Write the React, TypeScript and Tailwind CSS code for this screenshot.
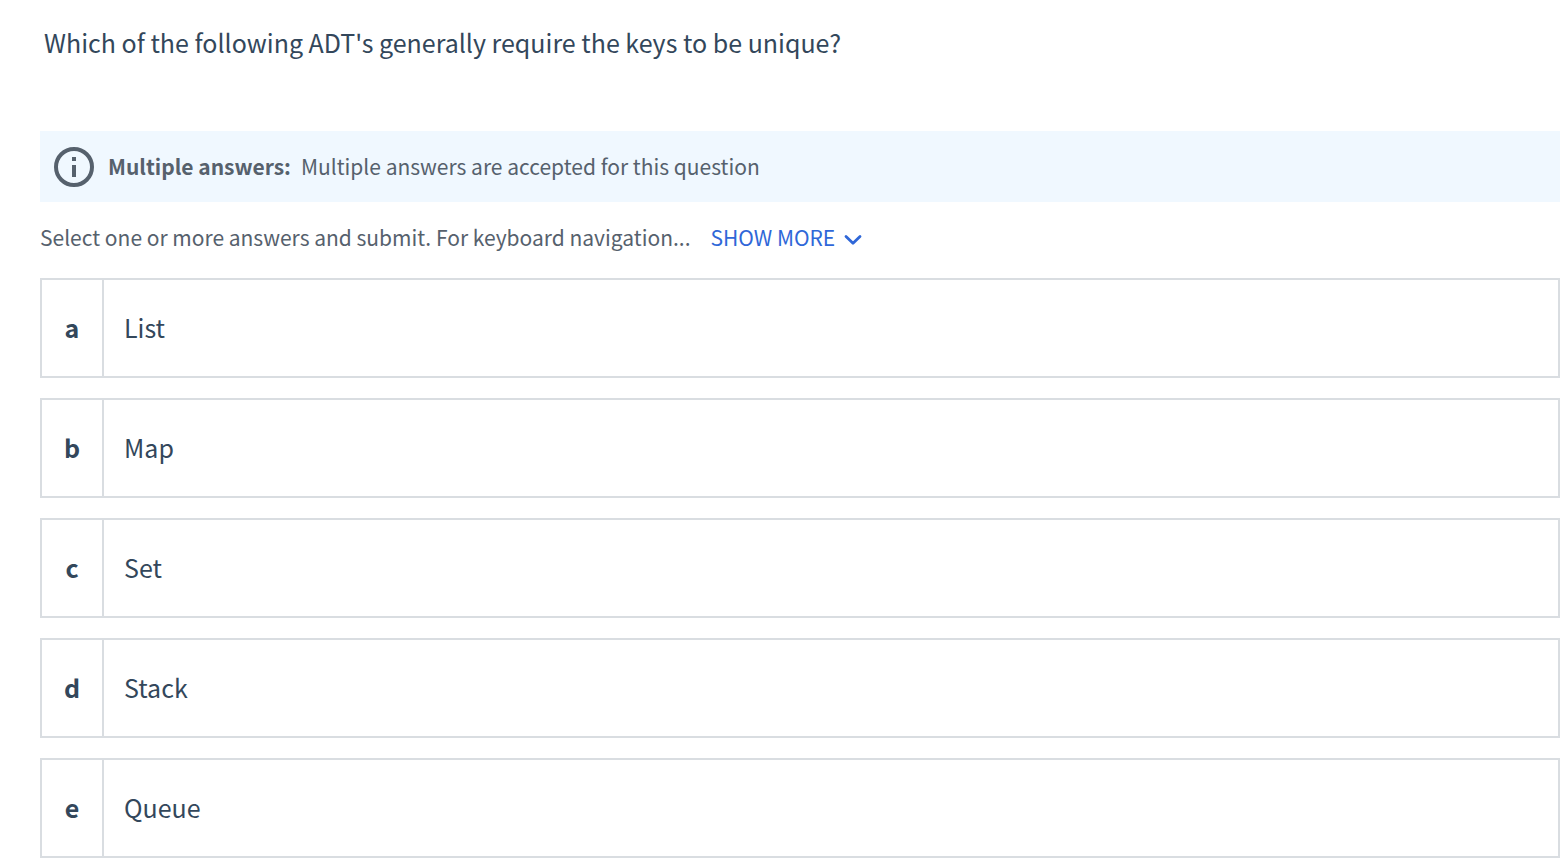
import React, { useState } from 'react';

interface Answer {
  id: string;
  label: string;
}

const answers: Answer[] = [
  { id: 'a', label: 'List' },
  { id: 'b', label: 'Map' },
  { id: 'c', label: 'Set' },
  { id: 'd', label: 'Stack' },
  { id: 'e', label: 'Queue' },
];

const InfoIcon: React.FC = () => (
  <svg className="h-10 w-10 shrink-0" viewBox="0 0 40 40" fill="none" aria-hidden="true">
    <circle cx="20" cy="20" r="18" stroke="currentColor" strokeWidth="4" />
    <path d="M18 10h4v4h-4zM18 18h4v12h-4z" fill="currentColor" />
  </svg>
);

const ChevronIcon: React.FC = () => (
  <svg className="h-5 w-5" viewBox="0 0 20 20" fill="none" aria-hidden="true">
    <path
      d="M3 9.5l7 6.8 7-6.8"
      stroke="currentColor"
      strokeWidth="2.8"
      strokeLinecap="round"
      strokeLinejoin="round"
    />
  </svg>
);

interface AnswerRowProps {
  answer: Answer;
  selected: boolean;
  onToggle: (id: string) => void;
}

const AnswerRow: React.FC<AnswerRowProps> = ({ answer, selected, onToggle }) => (
  <button
    type="button"
    aria-pressed={selected}
    onClick={() => onToggle(answer.id)}
    className={`flex w-full items-stretch border-2 border-[#d9dde1] text-left text-[25px] leading-9 ${
      selected ? 'bg-[#f0f8ff]' : 'bg-white'
    }`}
  >
    <span className="flex w-[62px] shrink-0 items-center justify-center border-r-2 border-[#d9dde1] pb-0.5 font-bold">
      {answer.id}
    </span>
    <span className="px-5 pt-[29px] pb-[31px]">{answer.label}</span>
  </button>
);

export default function App() {
  const [selected, setSelected] = useState<string[]>([]);
  const [expanded, setExpanded] = useState(false);

  const toggle = (id: string) => {
    setSelected((prev) => (prev.includes(id) ? prev.filter((s) => s !== id) : [...prev, id]));
  };

  return (
    <main className="min-h-screen bg-white pt-[22px] pr-1 pb-1.5 pl-10 font-['Noto_Sans_CJK_SC',sans-serif] text-[#33475b]">
      <h1 className="px-1 text-[25px] leading-10">
        Which of the following ADT's generally require the keys to be unique?
      </h1>

      <div className="mt-[69px] flex items-center bg-[#f0f8ff] px-3.5 pt-4 pb-[15px] text-[#56616d]">
        <InfoIcon />
        <p className="ml-3.5 pb-0.5 text-[21px] leading-[38px]">
          <strong className="mr-2.5 font-bold">Multiple answers:</strong>
          Multiple answers are accepted for this question
        </p>
      </div>

      <div className="flex items-center gap-5 pt-[15px] pb-[21px] text-[21px] leading-10 text-[#56616d]">
        <p>
          {expanded
            ? 'Select one or more answers and submit. For keyboard navigation, use the letter keys.'
            : 'Select one or more answers and submit. For keyboard navigation...'}
        </p>
        <button
          type="button"
          aria-expanded={expanded}
          onClick={() => setExpanded(!expanded)}
          className="flex items-center gap-2 text-[#2f67d8]"
        >
          {expanded ? 'SHOW LESS' : 'SHOW MORE'}
          <ChevronIcon />
        </button>
      </div>

      <div className="flex flex-col gap-5">
        {answers.map((answer) => (
          <AnswerRow
            key={answer.id}
            answer={answer}
            selected={selected.includes(answer.id)}
            onToggle={toggle}
          />
        ))}
      </div>
    </main>
  );
}
